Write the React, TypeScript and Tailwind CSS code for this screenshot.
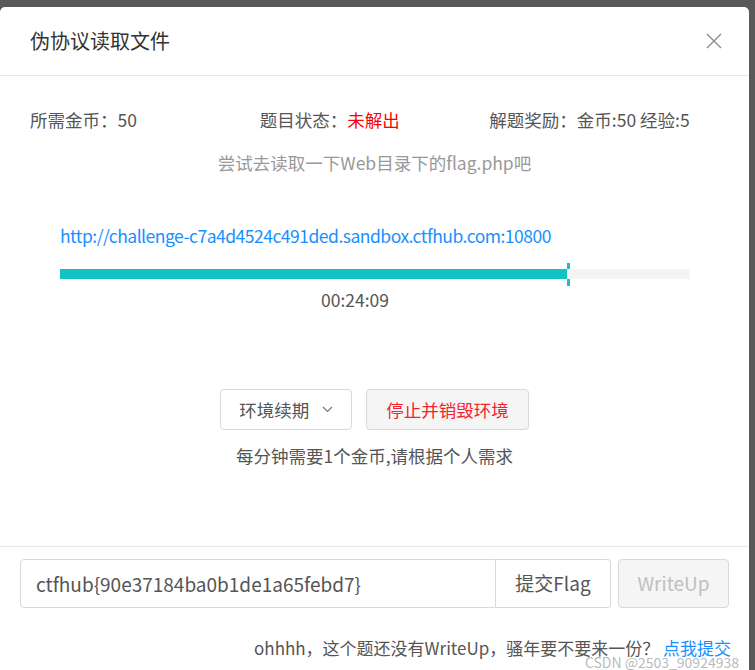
import React from "react";

const font = { fontFamily: '"Noto Sans CJK SC", "Noto Sans", sans-serif' };

function CloseIcon() {
  return (
    <svg width="16" height="16" viewBox="0 0 16 16" fill="none">
      <path d="M1 1L15 15M15 1L1 15" stroke="#8c8c8c" strokeWidth="1.4" />
    </svg>
  );
}

function ChevronDown() {
  return (
    <svg width="11" height="7" viewBox="0 0 11 7" fill="none">
      <path d="M1 1L5.5 5.5L10 1" stroke="#777" strokeWidth="1.2" />
    </svg>
  );
}

export default function App() {
  const progress = 80.5;

  return (
    <div className="w-[755px] h-[670px] bg-[#595959] overflow-hidden pt-[7px] pr-[6px]" style={font}>
      <div className="relative h-full bg-white rounded-t-[5px] flex flex-col">
        {/* header */}
        <div className="h-[69px] shrink-0 pl-[30px] pr-[27px] flex items-center justify-between border-b border-[#e8e8e8]">
          <h1 className="text-[20px] text-[#333] leading-none">伪协议读取文件</h1>
          <button className="p-0">
            <CloseIcon />
          </button>
        </div>

        {/* body */}
        <div className="h-[470px] shrink-0 flex flex-col text-[17.5px] leading-[24px] text-[#555]">
          <div className="mt-[32px] px-[30px] grid grid-cols-3">
            <div>所需金币：50</div>
            <div>
              题目状态：<span className="text-[#ff0000]">未解出</span>
            </div>
            <div>解题奖励：金币:50 经验:5</div>
          </div>

          <div className="mt-[19px] text-center text-[#999]">尝试去读取一下Web目录下的flag.php吧</div>

          <div className="mt-[49px] pl-[60px] pr-[59px]">
            <a className="text-[#1890ff] tracking-[-0.5px]">http://challenge-c7a4d4524c491ded.sandbox.ctfhub.com:10800</a>

            <div className="relative mt-[21px] h-[10px]">
              <div
                className="absolute top-[-6px] bottom-[-7px] w-[3px] bg-[#13c2c2]"
                style={{ left: `${progress}%` }}
              />
              <div className="relative h-full bg-[#f4f4f4]">
                <div className="h-full bg-[#13c2c2]" style={{ width: `${progress}%` }} />
              </div>
            </div>

            <div className="mt-[9px] pr-[40px] text-center">00:24:09</div>
          </div>

          <div className="mt-[77px] flex justify-center gap-[14px]">
            <button className="h-[41px] px-[18px] flex items-center gap-[13px] bg-white border border-[#d9d9d9] rounded-[4px] text-[#555]">
              环境续期
              <ChevronDown />
            </button>
            <button className="h-[41px] px-[19px] bg-[#f5f5f5] border border-[#d9d9d9] rounded-[4px] text-[#f5222d]">
              停止并销毁环境
            </button>
          </div>

          <div className="mt-[14px] text-center">每分钟需要1个金币,请根据个人需求</div>
        </div>

        {/* footer */}
        <div className="border-t border-[#e8e8e8] px-[20px] pt-[12px]">
          <div className="flex gap-[7px] h-[49px]">
            <div className="flex flex-1">
              <input
                readOnly
                value="ctfhub{90e37184ba0b1de1a65febd7}"
                className="flex-1 min-w-0 h-full pl-[15px] border border-[#d9d9d9] rounded-l-[4px] text-[19px] text-[#555] outline-none"
                style={font}
              />
              <button className="w-[115px] h-full border border-l-0 border-[#d9d9d9] rounded-r-[4px] bg-white text-[19px] text-[#555]">
                提交Flag
              </button>
            </div>
            <button className="w-[111px] h-full border border-[#d9d9d9] rounded-[4px] bg-[#f5f5f5] text-[19px] text-[#bfbfbf]">
              WriteUp
            </button>
          </div>

          <div className="mt-[28px] mr-[-2px] text-right text-[17px] leading-[24px] text-[#555]">
            ohhhh，这个题还没有WriteUp，骚年要不要来一份？ <a className="text-[#1890ff]">点我提交</a>
          </div>
        </div>

        <div className="absolute right-[10px] bottom-[1px] text-[14px] leading-none text-[#9a9a9a]/70">
          CSDN @2503_90924938
        </div>
      </div>
    </div>
  );
}
